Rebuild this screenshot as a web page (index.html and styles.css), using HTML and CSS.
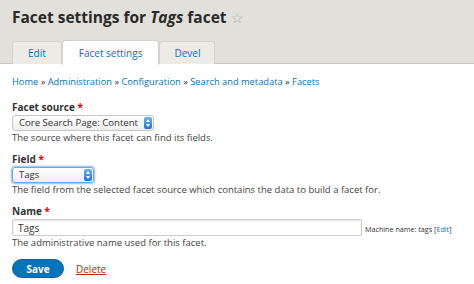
FILE: index.html
```html
<!DOCTYPE html>
<html lang="en">
<head>
    <meta charset="UTF-8">
    <title>Facet settings for Tags facet</title>
    <link rel="stylesheet" href="styles.css">
</head>
<body>
  <div class="header">
    <h1>Facet settings for <em>Tags</em> facet <span class="star">&#9734;</span></h1>
    <ul class="tabs">
      <li class="tab"><a href="#">Edit</a></li>
      <li class="tab active"><a href="#">Facet settings</a></li>
      <li class="tab"><a href="#">Devel</a></li>
    </ul>
  </div>
  <div class="content">
    <div class="breadcrumb">
      <a href="#">Home</a> » <a href="#">Administration</a> » <a href="#">Configuration</a> » <a href="#">Search and metadata</a> » <a href="#">Facets</a>
    </div>

    <div class="form-item first">
      <label>Facet source <span class="req">*</span></label>
      <div class="select">Core Search Page: Content<span class="arrows"></span></div>
      <div class="description">The source where this facet can find its fields.</div>
    </div>

    <div class="form-item">
      <label>Field <span class="req">*</span></label>
      <div class="select narrow focus">Tags<span class="arrows"></span></div>
      <div class="description">The field from the selected facet source which contains the data to build a facet for.</div>
    </div>

    <div class="form-item">
      <label>Name <span class="req">*</span></label>
      <div class="name-row">
        <input type="text" value="Tags">
        <span class="machine">Machine name: tags [<a href="#">Edit</a>]</span>
      </div>
      <div class="description">The administrative name used for this facet.</div>
    </div>

    <div class="actions">
      <button class="save">Save</button>
      <a href="#" class="delete">Delete</a>
    </div>
  </div>
</body>
</html>
```

FILE: styles.css
```css
body {
    margin: 0;
    font-family: "Open Sans", sans-serif;
    color: #333;
    background: #fff;
}
a {
    color: #0074bd;
    text-decoration: none;
}
.header {
    background: #e1e0da;
    border-bottom: 1px solid #c8c7c1;
    padding: 6px 12px 0;
    height: 57px;
}
h1 {
    margin: 0;
    font-size: 15.5px;
    line-height: 22px;
    color: #2a2a2a;
    white-space: nowrap;
}
h1 em {
    font-style: italic;
}
.star {
    font-weight: normal;
    color: #aaa;
    font-size: 14px;
}
.tabs {
    list-style: none;
    margin: 11px 0 0;
    padding: 0;
    display: flex;
    align-items: flex-end;
}
.tab {
    background: #ecebe6;
    border: 1px solid #d3d2cc;
    border-bottom: none;
    border-radius: 4px 4px 0 0;
    height: 22px;
    display: flex;
    align-items: center;
    font-size: 10px;
}
.tab a {
    padding: 0 15px;
}
.tab.active {
    background: #fff;
    height: 24px;
    margin-bottom: -1px;
}
.tab.active a {
    padding: 0 16px;
}
.tab:last-child a {
    padding: 0 14px;
}
.content {
    padding: 0 12px;
}
.breadcrumb {
    font-size: 9.3px;
    margin-top: 11px;
    line-height: 14px;
}
.form-item {
    margin-top: 8px;
}
.form-item.first {
    margin-top: 12px;
}
label {
    display: block;
    font-weight: bold;
    font-size: 10px;
    line-height: 13px;
    color: #333;
}
.req {
    color: #e00;
}
.select {
    width: max-content;
    margin-top: 1px;
    height: 14px;
    border: 1px solid #c8c8c8;
    border-radius: 3px;
    font-size: 9.6px;
    line-height: 14px;
    padding: 0 15px 0 6px;
    position: relative;
    white-space: nowrap;
    background: linear-gradient(#fff, #eee);
}
.select.narrow {
    width: 59px;
}
.select.focus {
    border-color: #6aa6e2;
    box-shadow: 0 0 2px 1px #8cbcf0;
}
.arrows {
    position: absolute;
    right: 1px;
    top: 1px;
    width: 8px;
    height: 12px;
    border-radius: 2px;
    background: linear-gradient(#6fb1f5, #1e72dc);
}
.arrows::before,
.arrows::after {
    content: "";
    position: absolute;
    left: 2px;
    border-left: 2px solid transparent;
    border-right: 2px solid transparent;
}
.arrows::before {
    top: 2px;
    border-bottom: 3px solid #fff;
}
.arrows::after {
    bottom: 2px;
    border-top: 3px solid #fff;
}
.description {
    font-size: 9.5px;
    line-height: 14px;
    margin-top: 0;
    color: #444;
}
.name-row {
    display: flex;
    align-items: center;
    margin-top: 1px;
}
.name-row input {
    width: 350px;
    height: 17px;
    box-sizing: border-box;
    border: 1px solid #ccc;
    border-radius: 2px;
    padding: 0 5px;
    font-family: inherit;
    font-size: 10px;
    color: #333;
    margin: 0;
    box-shadow: inset 0 1px 2px rgba(0, 0, 0, 0.1);
}
.machine {
    font-size: 7.2px;
    margin-left: 3px;
    margin-top: 2px;
    white-space: nowrap;
}
.actions {
    margin-top: 9px;
    display: flex;
    align-items: center;
}
.save {
    background: #0074bd;
    color: #fff;
    border: 1px solid #1e5c90;
    border-radius: 10px;
    width: 52px;
    height: 19px;
    font-family: inherit;
    font-weight: bold;
    font-size: 10px;
    padding: 0;
}
.delete {
    color: #c72100;
    text-decoration: underline;
    font-size: 10px;
    margin-left: 12px;
}
```
